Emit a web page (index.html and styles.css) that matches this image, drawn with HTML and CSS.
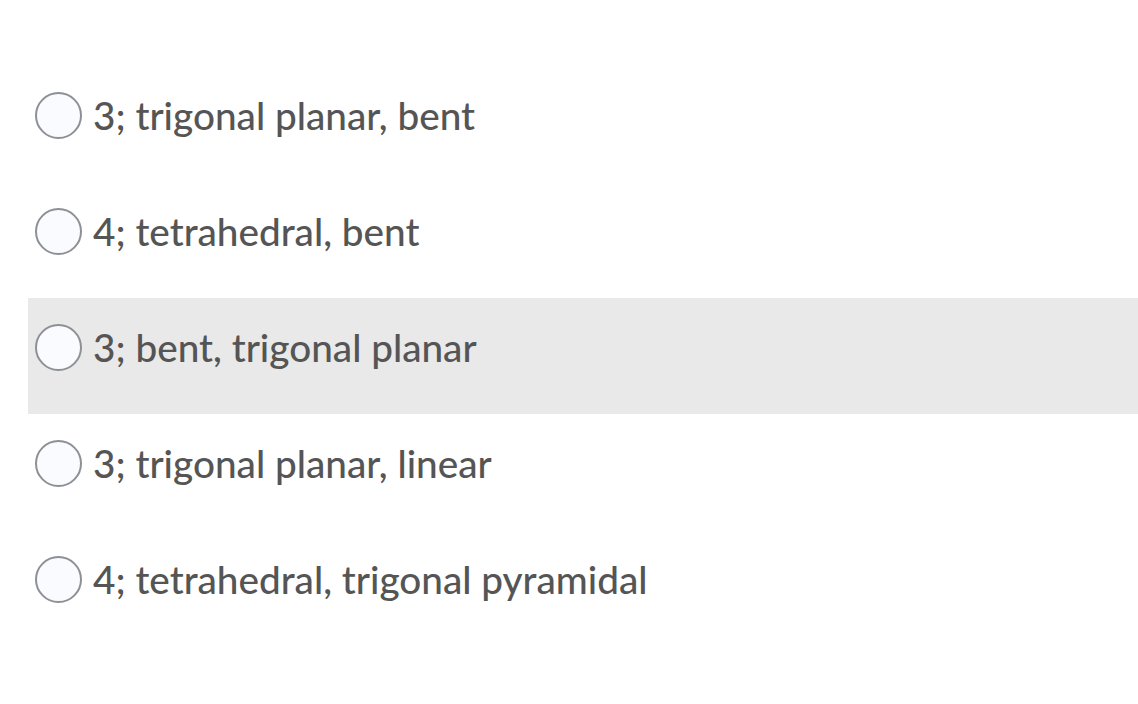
FILE: index.html
```html
<!DOCTYPE html>
<html>
<head>
<meta charset="utf-8">
<link rel="stylesheet" href="styles.css">
</head>
<body>
<div class="list">
  <div class="opt"><span class="radio"></span><span class="label">3; trigonal planar, bent</span></div>
  <div class="opt"><span class="radio"></span><span class="label">4; tetrahedral, bent</span></div>
  <div class="opt hover"><span class="radio"></span><span class="label">3; bent, trigonal planar</span></div>
  <div class="opt"><span class="radio"></span><span class="label">3; trigonal planar, linear</span></div>
  <div class="opt"><span class="radio"></span><span class="label">4; tetrahedral, trigonal pyramidal</span></div>
</div>
</body>
</html>
```
FILE: styles.css
```css
html, body {
  margin: 0;
  padding: 0;
  background: #ffffff;
}
body {
  font-family: Lato, "Liberation Sans", sans-serif;
  color: #555555;
}
.list {
  padding-top: 66px;
  padding-left: 28px;
  display: flex;
  flex-direction: column;
}
.opt {
  height: 116px;
  display: flex;
  align-items: center;
  padding-left: 7px;
  padding-bottom: 18px;
  box-sizing: border-box;
}
.opt.hover {
  background: #e9e9e9;
}
.radio {
  width: 47px;
  height: 47px;
  box-sizing: border-box;
  border: 2px solid #8d9094;
  border-radius: 50%;
  background: #f9fbff;
  flex: none;
}
.label {
  margin-left: 11px;
  font-size: 38.7px;
  font-weight: 500;
  line-height: 1;
}
```
